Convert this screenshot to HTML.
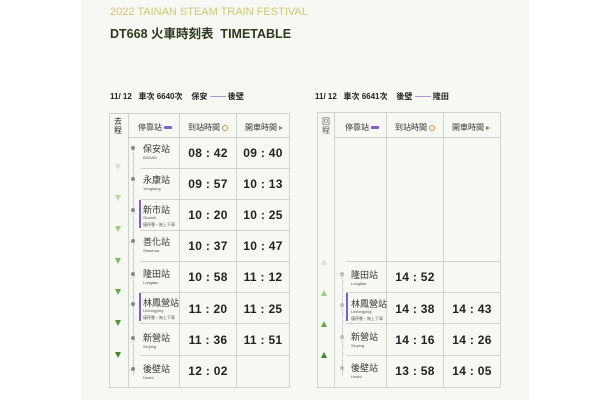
<!DOCTYPE html>
<html><head><meta charset="utf-8"><style>
*{margin:0;padding:0;box-sizing:border-box}
body{width:600px;height:400px;background:#fff;position:relative;overflow:hidden;font-family:"Liberation Sans","Noto Sans CJK TC",sans-serif;color:#222}
.panel{position:absolute;left:81px;top:0;width:448px;height:400px;background:#f7f7f3}
.a{position:absolute;white-space:nowrap}
.l{position:absolute;background:#d2d2cc}
.t{position:absolute;font-weight:bold;font-size:12px;text-align:center;letter-spacing:0.3px}
.n{position:absolute;font-size:9px;color:#333}
.r{position:absolute;font-size:4px;color:#555}
.dot{position:absolute;width:4px;height:4px;border-radius:2px;background:#888}
.dl{position:absolute;width:0;border-left:1px dotted #aaa}
.tri{position:absolute;width:0;height:0;border-left:3.5px solid transparent;border-right:3.5px solid transparent}
.h{position:absolute;font-size:8px;color:#333}
</style></head><body>
<div class="panel"></div>
<div class="a" style="left:110px;top:6px;font-size:11px;color:#cfc873">2022 TAINAN STEAM TRAIN FESTIVAL</div>
<div class="a" style="left:110px;top:23px;font-size:12.5px;font-weight:bold;color:#2d3a1e">DT668 火車時刻表&nbsp; TIMETABLE</div>

<div class="a" style="left:110px;top:91px;font-size:8px;font-weight:bold">11/ 12&nbsp;&nbsp; 車次 6640次 &nbsp;&nbsp; 保安 <span style="display:inline-block;width:16px;height:1px;background:#a99ad0;vertical-align:middle"></span> 後壁</div>
<div class="a" style="left:315px;top:91px;font-size:8px;font-weight:bold">11/ 12&nbsp;&nbsp; 車次 6641次 &nbsp;&nbsp; 後壁 <span style="display:inline-block;width:16px;height:1px;background:#a99ad0;vertical-align:middle"></span> 隆田</div>

<div class="l" style="left:109px;top:113px;width:181px;height:1px"></div>
<div class="l" style="left:109px;top:387px;width:181px;height:1px"></div>
<div class="l" style="left:109px;top:113px;width:1px;height:275px"></div>
<div class="l" style="left:128px;top:113px;width:1px;height:275px"></div>
<div class="l" style="left:179px;top:113px;width:1px;height:275px"></div>
<div class="l" style="left:236px;top:113px;width:1px;height:275px"></div>
<div class="l" style="left:289px;top:113px;width:1px;height:275px"></div>
<div class="l" style="left:128px;top:137px;width:161px;height:1px"></div>
<div class="a" style="left:114px;top:117px;font-size:8px;line-height:9px;width:12px">去<br>程</div>
<div class="h" style="left:138px;top:122px">停靠站 <span style="display:inline-block;width:8px;height:3px;background:#7e62c9;border-radius:1px;vertical-align:middle"></span></div>
<div class="h" style="left:188px;top:122px">到站時間 <span style="display:inline-block;width:6px;height:6px;border:1.5px solid #e9872f;border-radius:3px;vertical-align:middle"></span></div>
<div class="h" style="left:245px;top:122px">開車時間 <span style="display:inline-block;border-left:4px solid #5aa33a;border-top:2.5px solid transparent;border-bottom:2.5px solid transparent;vertical-align:middle"></span></div>
<div class="dl" style="left:133px;top:150px;height:225px"></div>

<div class="l" style="left:317px;top:112px;width:184px;height:1px"></div>
<div class="l" style="left:317px;top:387px;width:184px;height:1px"></div>
<div class="l" style="left:317px;top:112px;width:1px;height:276px"></div>
<div class="l" style="left:334px;top:112px;width:1px;height:276px"></div>
<div class="l" style="left:386px;top:112px;width:1px;height:276px"></div>
<div class="l" style="left:443px;top:112px;width:1px;height:276px"></div>
<div class="l" style="left:500px;top:112px;width:1px;height:276px"></div>
<div class="l" style="left:334px;top:137px;width:166px;height:1px"></div>
<div class="a" style="left:322px;top:117px;font-size:8px;line-height:9px;width:12px;color:#555">回<br>程</div>
<div class="h" style="left:345px;top:122px">停靠站 <span style="display:inline-block;width:8px;height:3px;background:#7e62c9;border-radius:1px;vertical-align:middle"></span></div>
<div class="h" style="left:395px;top:122px">到站時間 <span style="display:inline-block;width:6px;height:6px;border:1.5px solid #e9872f;border-radius:3px;vertical-align:middle"></span></div>
<div class="h" style="left:452px;top:122px">開車時間 <span style="display:inline-block;border-left:4px solid #5aa33a;border-top:2.5px solid transparent;border-bottom:2.5px solid transparent;vertical-align:middle"></span></div>
<div class="dl" style="left:342px;top:275px;height:100px"></div>

<div class="l" style="left:140px;top:168px;width:149px;height:1px"></div>
<div class="l" style="left:140px;top:199px;width:149px;height:1px"></div>
<div class="l" style="left:140px;top:230px;width:149px;height:1px"></div>
<div class="l" style="left:140px;top:261px;width:149px;height:1px"></div>
<div class="l" style="left:140px;top:292px;width:149px;height:1px"></div>
<div class="l" style="left:140px;top:323px;width:149px;height:1px"></div>
<div class="l" style="left:140px;top:355px;width:149px;height:1px"></div>

<div class="dot" style="left:131px;top:146px"></div><div class="n" style="left:143px;top:142px">保安站</div><div class="r" style="left:143px;top:155px">BADAN</div>
<div class="t" style="left:180px;top:146px;width:56px">08 : 42</div><div class="t" style="left:237px;top:146px;width:52px">09 : 40</div>
<div class="dot" style="left:131px;top:177px"></div><div class="n" style="left:143px;top:173px">永康站</div><div class="r" style="left:143px;top:186px">Yongkang</div>
<div class="t" style="left:180px;top:177px;width:56px">09 : 57</div><div class="t" style="left:237px;top:177px;width:52px">10 : 13</div>
<div style="position:absolute;left:139px;top:200px;width:1.5px;height:28px;background:#7e62c9"></div>
<div class="dot" style="left:131px;top:208px"></div><div class="n" style="left:143px;top:203px">新市站</div><div class="r" style="left:143px;top:215px">Sinshih</div><div class="r" style="left:143px;top:222px">僅停靠・無上下車</div>
<div class="t" style="left:180px;top:208px;width:56px">10 : 20</div><div class="t" style="left:237px;top:208px;width:52px">10 : 25</div>
<div class="dot" style="left:131px;top:239px"></div><div class="n" style="left:143px;top:235px">善化站</div><div class="r" style="left:143px;top:248px">Shanhua</div>
<div class="t" style="left:180px;top:239px;width:56px">10 : 37</div><div class="t" style="left:237px;top:239px;width:52px">10 : 47</div>
<div class="dot" style="left:131px;top:272px"></div><div class="n" style="left:143px;top:267px">隆田站</div><div class="r" style="left:143px;top:280px">Longtian</div>
<div class="t" style="left:180px;top:270px;width:56px">10 : 58</div><div class="t" style="left:237px;top:270px;width:52px">11 : 12</div>
<div style="position:absolute;left:139px;top:293px;width:1.5px;height:28px;background:#7e62c9"></div>
<div class="dot" style="left:131px;top:302px"></div><div class="n" style="left:143px;top:296px">林鳳營站</div><div class="r" style="left:143px;top:308px">Linfongying</div><div class="r" style="left:143px;top:315px">僅停靠・無上下車</div>
<div class="t" style="left:180px;top:302px;width:56px">11 : 20</div><div class="t" style="left:237px;top:302px;width:52px">11 : 25</div>
<div class="dot" style="left:131px;top:336px"></div><div class="n" style="left:143px;top:331px">新營站</div><div class="r" style="left:143px;top:344px">Sinying</div>
<div class="t" style="left:180px;top:333px;width:56px">11 : 36</div><div class="t" style="left:237px;top:333px;width:52px">11 : 51</div>
<div class="dot" style="left:131px;top:367px"></div><div class="n" style="left:143px;top:362px">後壁站</div><div class="r" style="left:143px;top:375px">Houbi</div>
<div class="t" style="left:180px;top:364px;width:56px">12 : 02</div>

<div class="tri" style="left:115px;top:164px;border-top:6px solid #d6e6c8"></div>
<div class="tri" style="left:115px;top:195px;border-top:6px solid #b7d9a3"></div>
<div class="tri" style="left:115px;top:226px;border-top:6px solid #9ccd83"></div>
<div class="tri" style="left:115px;top:258px;border-top:6px solid #7dbd62"></div>
<div class="tri" style="left:115px;top:289px;border-top:6px solid #5eab44"></div>
<div class="tri" style="left:115px;top:320px;border-top:6px solid #4c9a35"></div>
<div class="tri" style="left:115px;top:352px;border-top:6px solid #3e8a2a"></div>

<div class="l" style="left:346px;top:261px;width:154px;height:1px"></div>
<div class="l" style="left:346px;top:292px;width:154px;height:1px"></div>
<div class="l" style="left:346px;top:323px;width:154px;height:1px"></div>
<div class="l" style="left:346px;top:355px;width:154px;height:1px"></div>

<div class="dot" style="left:340px;top:272px;background:#bbb"></div><div class="n" style="left:351px;top:268px">隆田站</div><div class="r" style="left:351px;top:281px">Longtian</div>
<div class="t" style="left:387px;top:270px;width:56px">14 : 52</div>
<div style="position:absolute;left:346px;top:293px;width:1.5px;height:28px;background:#7e62c9"></div>
<div class="dot" style="left:340px;top:303px;background:#bbb"></div><div class="n" style="left:351px;top:297px">林鳳營站</div><div class="r" style="left:351px;top:309px">Linfongying</div><div class="r" style="left:351px;top:316px">僅停靠・無上下車</div>
<div class="t" style="left:387px;top:302px;width:56px">14 : 38</div><div class="t" style="left:444px;top:302px;width:56px">14 : 43</div>
<div class="dot" style="left:340px;top:335px;background:#bbb"></div><div class="n" style="left:351px;top:330px">新營站</div><div class="r" style="left:351px;top:343px">Sinying</div>
<div class="t" style="left:387px;top:333px;width:56px">14 : 16</div><div class="t" style="left:444px;top:333px;width:56px">14 : 26</div>
<div class="dot" style="left:340px;top:366px;background:#bbb"></div><div class="n" style="left:351px;top:361px">後壁站</div><div class="r" style="left:351px;top:374px">Houbi</div>
<div class="t" style="left:387px;top:364px;width:56px">13 : 58</div><div class="t" style="left:444px;top:364px;width:56px">14 : 05</div>

<div class="tri" style="left:321px;top:259px;border-bottom:6px solid #d6e6c8"></div>
<div class="tri" style="left:321px;top:290px;border-bottom:6px solid #9ccd83"></div>
<div class="tri" style="left:321px;top:321px;border-bottom:6px solid #5eab44"></div>
<div class="tri" style="left:321px;top:352px;border-bottom:6px solid #3e8a2a"></div>
</body></html>
